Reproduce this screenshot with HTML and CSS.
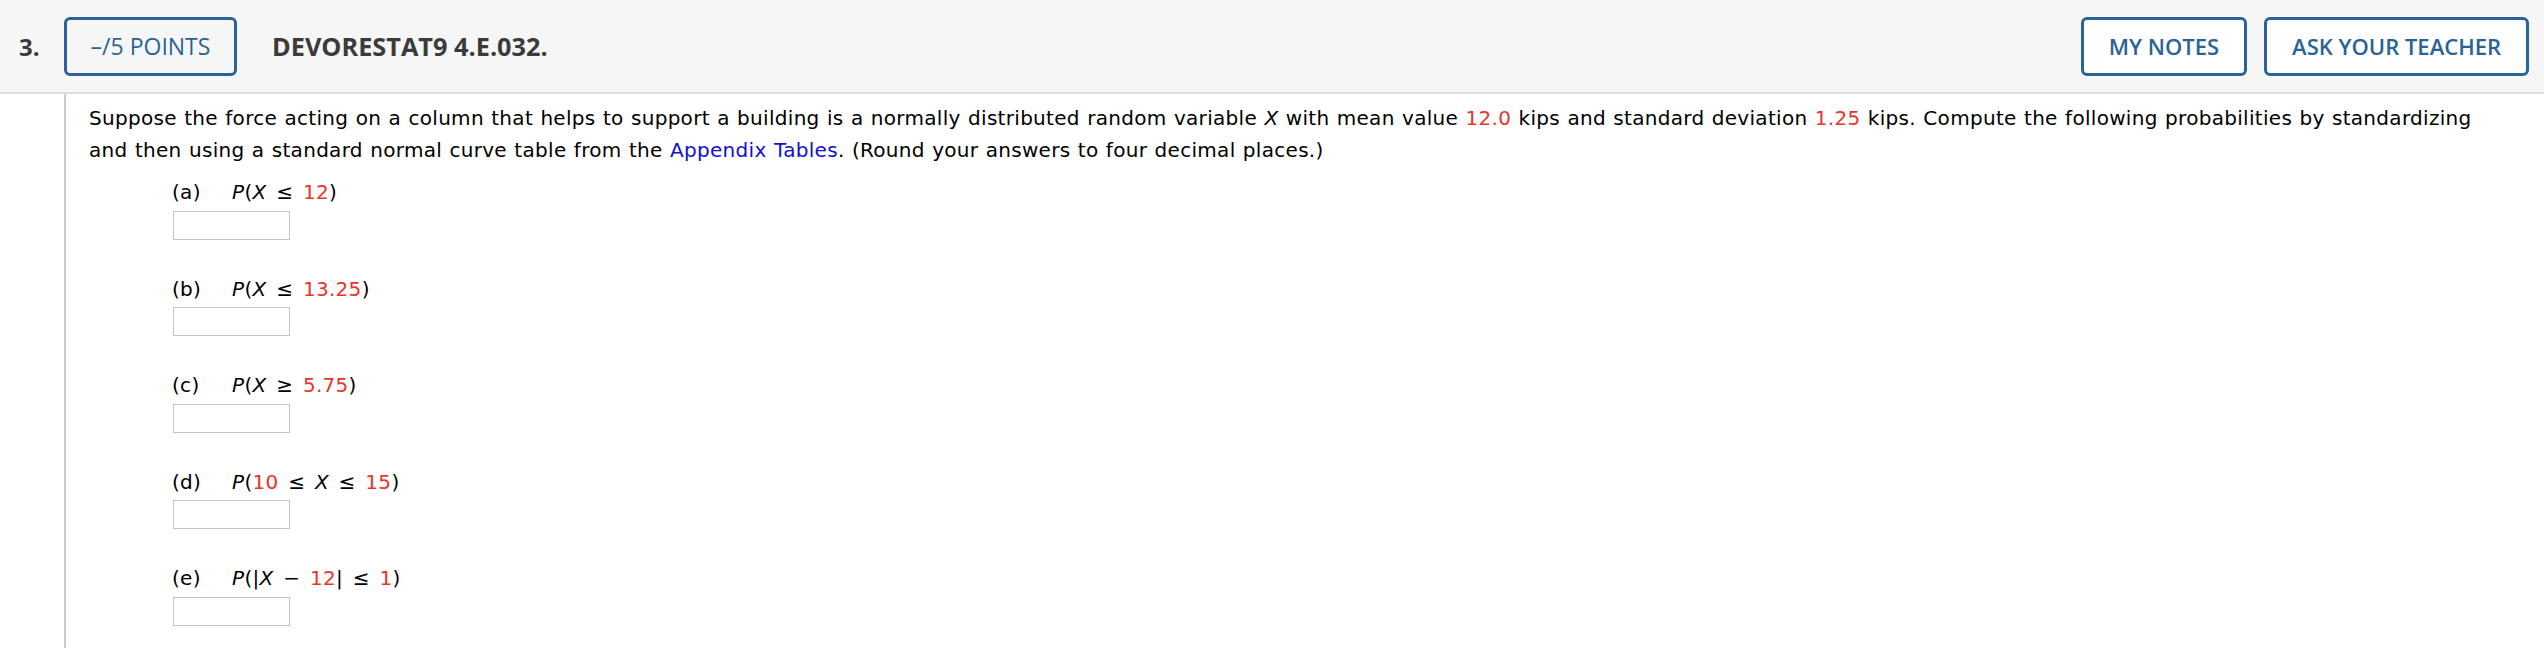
FILE: index.html
```html
<!DOCTYPE html>
<html lang="en">
<head>
<meta charset="utf-8">
<title>DEVORESTAT9 4.E.032.</title>
<link rel="stylesheet" href="styles.css">
</head>
<body>
<div class="question">
  <div class="qhead">
    <div class="qhead-left">
      <span class="qnum">3.</span>
      <span class="points">&ndash;/5 POINTS</span>
      <span class="qtitle">DEVORESTAT9 4.E.032.</span>
    </div>
    <div class="qhead-right">
      <button class="btn" type="button">MY NOTES</button>
      <button class="btn" type="button">ASK YOUR TEACHER</button>
    </div>
  </div>
  <div class="qbody">
    <p class="stem">Suppose the force acting on a column that helps to support a building is a normally distributed random variable <i>X</i> with mean value <span class="num">12.0</span> kips and standard deviation <span class="num">1.25</span> kips. Compute the following probabilities by standardizing and then using a standard normal curve table from the <a class="link" href="#">Appendix Tables</a>. (Round your answers to four decimal places.)</p>
    <div class="parts">
      <div class="part">
        <div class="part-row"><span class="lbl">(a)</span><span class="expr"><i>P</i>(<i>X</i> &le; <span class="num">12</span>)</span></div>
        <div class="answer"></div>
      </div>
      <div class="part">
        <div class="part-row"><span class="lbl">(b)</span><span class="expr"><i>P</i>(<i>X</i> &le; <span class="num">13.25</span>)</span></div>
        <div class="answer"></div>
      </div>
      <div class="part">
        <div class="part-row"><span class="lbl">(c)</span><span class="expr"><i>P</i>(<i>X</i> &ge; <span class="num">5.75</span>)</span></div>
        <div class="answer"></div>
      </div>
      <div class="part">
        <div class="part-row"><span class="lbl">(d)</span><span class="expr"><i>P</i>(<span class="num">10</span> &le; <i>X</i> &le; <span class="num">15</span>)</span></div>
        <div class="answer"></div>
      </div>
      <div class="part">
        <div class="part-row"><span class="lbl">(e)</span><span class="expr"><i>P</i>(|<i>X</i> &minus; <span class="num">12</span>| &le; <span class="num">1</span>)</span></div>
        <div class="answer"></div>
      </div>
    </div>
  </div>
</div>
</body>
</html>
```

FILE: styles.css
```css
html, body {
  margin: 0;
  padding: 0;
  background: #ffffff;
}

.question {
  width: 2544px;
  height: 648px;
  overflow: hidden;
  display: flex;
  flex-direction: column;
}

.qhead {
  height: 92px;
  background: #f6f6f6;
  border-bottom: 2px solid #dedede;
  display: flex;
  align-items: center;
  justify-content: space-between;
  padding: 0 15px 0 19px;
  font-family: "Open Sans", "Liberation Sans", sans-serif;
}

.qhead-left {
  display: flex;
  align-items: center;
}

.qnum {
  width: 45px;
  font-size: 24px;
  font-weight: 700;
  color: #3b3b3b;
}

.points {
  box-sizing: border-box;
  height: 59px;
  width: 173px;
  display: flex;
  align-items: center;
  justify-content: center;
  border: 3px solid #2a6496;
  border-radius: 6px;
  color: #2a6496;
  font-size: 23px;
  font-weight: 400;
}

.qtitle {
  margin-left: 35px;
  font-size: 25.3px;
  font-weight: 700;
  color: #3b3b3b;
}

.qhead-right {
  display: flex;
  align-items: center;
  gap: 17px;
}

.btn {
  box-sizing: border-box;
  height: 59px;
  padding: 0 25px;
  border: 3px solid #2a6496;
  border-radius: 6px;
  background: #ffffff;
  color: #2a6496;
  font-family: "Open Sans", "Liberation Sans", sans-serif;
  font-size: 22px;
  font-weight: 600;
}

.qbody {
  flex: 1;
  margin-left: 64px;
  border-left: 2px solid #cccccc;
  padding: 9px 30px 0 23px;
  font-family: "DejaVu Sans", Verdana, sans-serif;
  font-size: 20px;
  letter-spacing: 0.3px;
  word-spacing: 0.7px;
  line-height: 31.5px;
  color: #000000;
}

.stem {
  margin: 0;
}

.num {
  color: #e9352b;
}

.link {
  color: #1010d0;
  text-decoration: none;
}

.parts {
  margin-top: 11px;
  margin-left: 83px;
  display: flex;
  flex-direction: column;
  gap: 34px;
}

.part-row {
  display: flex;
}

.lbl {
  width: 60px;
}

.expr {
  word-spacing: 3px;
}

.answer {
  box-sizing: border-box;
  width: 117px;
  height: 29px;
  margin-top: 2px;
  margin-left: 1px;
  border: 1px solid #c4c4c4;
  background: #ffffff;
}
```
